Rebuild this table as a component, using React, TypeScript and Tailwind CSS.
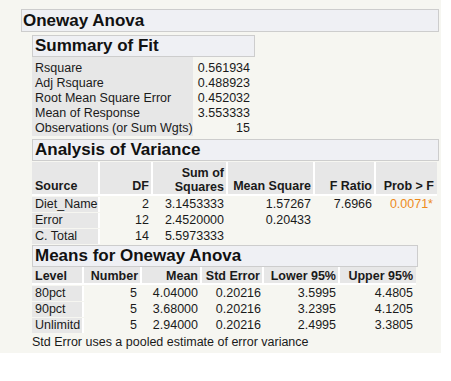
const font = { fontFamily: '"Liberation Sans", Arial, sans-serif' };

const fit = [
  ['Rsquare', '0.561934'],
  ['Adj Rsquare', '0.488923'],
  ['Root Mean Square Error', '0.452032'],
  ['Mean of Response', '3.553333'],
  ['Observations (or Sum Wgts)', '15'],
];

const aov = [
  ['Diet_Name', '2', '3.1453333', '1.57267', '7.6966', '0.0071*'],
  ['Error', '12', '2.4520000', '0.20433', '', ''],
  ['C. Total', '14', '5.5973333', '', '', ''],
];

const means = [
  ['80pct', '5', '4.04000', '0.20216', '3.5995', '4.4805'],
  ['90pct', '5', '3.68000', '0.20216', '3.2395', '4.1205'],
  ['Unlimitd', '5', '2.94000', '0.20216', '2.4995', '3.3805'],
];

function Title({ text, className }: { text: string; className: string }) {
  return (
    <div className={`h-[22px] border border-[#cdcdcd] bg-[#eff0f4] pl-[2px] text-[17px] font-bold leading-[20px] text-[#111] ${className}`}>
      {text}
    </div>
  );
}

export default function App() {
  return (
    <div className="min-h-[381px] bg-white" style={font}>
      <div className="w-[441px] h-[353px] bg-[#f6f6f1] pt-[9px] text-[12.5px] leading-[15px] text-[#1a1a1a]">
        <div className="ml-[21px] w-[418px] h-[23px] border border-[#cdcdcd] bg-[#eff0f4] pl-[1px] text-[17px] font-bold leading-[21px] text-[#111]">
          Oneway Anova
        </div>

        <div className="ml-[32px]">
          {/* Summary of Fit */}
          <Title text="Summary of Fit" className="mt-[3px] w-[223px]" />
          <div className="grid grid-cols-[161px_62px] w-[223px]">
            <div className="bg-[#e7e7e7] pt-[4px] pl-[3px]">
              {fit.map((r) => (
                <div key={r[0]} className="h-[15px] whitespace-nowrap">{r[0]}</div>
              ))}
            </div>
            <div className="pt-[4px] pr-[5px] text-right">
              {fit.map((r) => (
                <div key={r[0]} className="h-[15px]">{r[1]}</div>
              ))}
            </div>
          </div>

          {/* Analysis of Variance */}
          <Title text="Analysis of Variance" className="mt-[3px] w-[407px]" />
          <div className="mt-[1px] grid grid-cols-[68px_53px_75px_87px_61px_61px] w-[405px] font-normal">
            <div className="h-[34px] bg-[#e7e7e7] border-r-2 border-b-2 border-white pl-[3px] flex items-end font-bold">Source</div>
            <div className="h-[34px] bg-[#e7e7e7] border-r-2 border-b-2 border-white pr-[2px] flex items-end justify-end font-bold">DF</div>
            <div className="h-[34px] bg-[#e7e7e7] border-r-2 border-b-2 border-white pr-[2px] flex flex-col items-end justify-end font-bold leading-[14px]">
              <span>Sum of</span>
              <span>Squares</span>
            </div>
            <div className="h-[34px] bg-[#e7e7e7] border-r-2 border-b-2 border-white pr-[2px] flex items-end justify-end font-bold whitespace-nowrap">Mean Square</div>
            <div className="h-[34px] bg-[#e7e7e7] border-r-2 border-b-2 border-white pr-[2px] flex items-end justify-end font-bold">F Ratio</div>
            <div className="h-[34px] bg-[#e7e7e7] border-b-2 border-white pr-[3px] flex items-end justify-end font-bold whitespace-nowrap">{'Prob > F'}</div>
            {aov.map((r) => (
              <div key={r[0]} className="contents">
                <div className="h-[15px] bg-[#e7e7e7] border-r-2 border-white pl-[3px] mt-[1px]">{r[0]}</div>
                <div className="h-[15px] pr-[4px] text-right mt-[1px]">{r[1]}</div>
                <div className="h-[15px] pr-[4px] text-right mt-[1px]">{r[2]}</div>
                <div className="h-[15px] pr-[4px] text-right mt-[1px]">{r[3]}</div>
                <div className="h-[15px] pr-[4px] text-right mt-[1px]">{r[4]}</div>
                <div className="h-[15px] pr-[4px] text-right mt-[1px] text-[#ee8a1c]">{r[5]}</div>
              </div>
            ))}
          </div>

          {/* Means for Oneway Anova */}
          <Title text="Means for Oneway Anova" className="mt-[1px] w-[386px]" />
          <div className="grid grid-cols-[52px_58px_60px_62px_76px_76px] w-[384px]">
            {['Level', 'Number', 'Mean', 'Std Error', 'Lower 95%', 'Upper 95%'].map((h, i) => (
              <div
                key={h}
                className={`h-[18px] bg-[#e7e7e7] border-b-2 border-white pt-[2px] font-bold whitespace-nowrap ${i === 0 ? 'pl-[3px] border-r-2' : i === 5 ? 'pr-[3px] text-right' : 'pr-[2px] text-right border-r-2'}`}
              >
                {h}
              </div>
            ))}
            {means.map((r) => (
              <div key={r[0]} className="contents">
                <div className="h-[15px] bg-[#e7e7e7] border-r-2 border-white pl-[3px] mt-[1px]">{r[0]}</div>
                <div className="h-[15px] pr-[5px] text-right mt-[1px]">{r[1]}</div>
                <div className="h-[15px] pr-[4px] text-right mt-[1px]">{r[2]}</div>
                <div className="h-[15px] pr-[3px] text-right mt-[1px]">{r[3]}</div>
                <div className="h-[15px] pr-[4px] text-right mt-[1px]">{r[4]}</div>
                <div className="h-[15px] pr-[3px] text-right mt-[1px]">{r[5]}</div>
              </div>
            ))}
          </div>
          <div className="mt-[2px] h-[15px] whitespace-nowrap">Std Error uses a pooled estimate of error variance</div>
        </div>
      </div>
    </div>
  );
}
